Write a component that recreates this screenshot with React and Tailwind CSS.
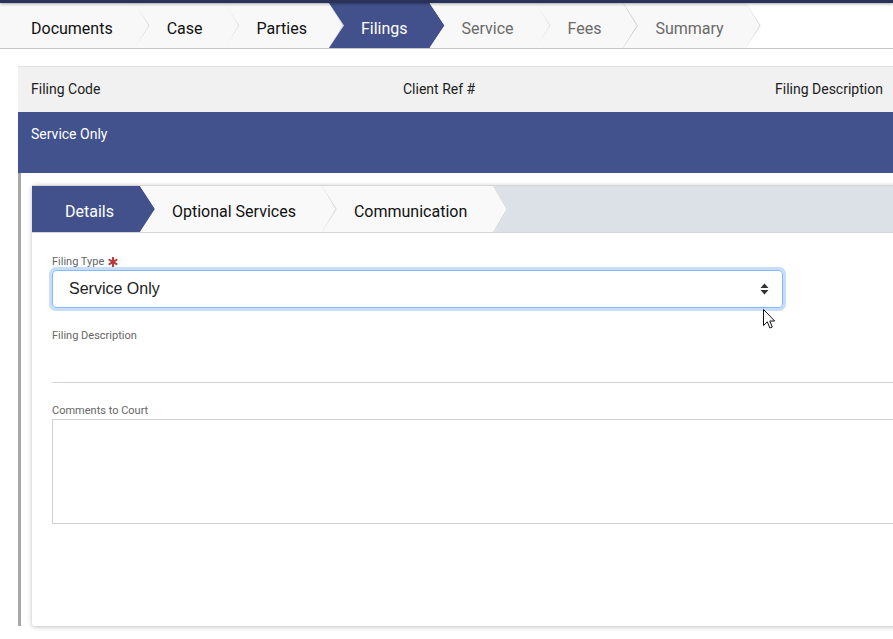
import React from "react";

const steps = [
  { label: "Documents", state: "done" },
  { label: "Case", state: "done" },
  { label: "Parties", state: "done" },
  { label: "Filings", state: "active" },
  { label: "Service", state: "todo" },
  { label: "Fees", state: "todo" },
  { label: "Summary", state: "todo" },
];

const tabs = [
  { label: "Details", active: true },
  { label: "Optional Services" },
  { label: "Communication" },
];

function Chevron() {
  return (
    <svg width="15" height="100%" viewBox="0 0 15 45" preserveAspectRatio="none" className="shrink-0 h-full">
      <polyline points="0.5,0 14.2,22.5 0.5,45" fill="none" stroke="#d6d6d6" strokeWidth="1.2" />
    </svg>
  );
}

function Step({ step, first }) {
  const active = step.state === "active";
  const shape = first
    ? "[clip-path:polygon(0_0,calc(100%_-_15px)_0,100%_50%,calc(100%_-_15px)_100%,0_100%)]"
    : "[clip-path:polygon(0_0,calc(100%_-_15px)_0,100%_50%,calc(100%_-_15px)_100%,0_100%,15px_50%)]";
  const color = active ? "text-white" : step.state === "done" ? "text-[#111]" : "text-[#6a6a6a]";
  return (
    <div
      className={`flex h-full items-stretch ${first ? "pl-[31px]" : "-ml-[15px] pl-[32px]"} ${shape} ${
        active ? "bg-[#42518c]" : "bg-[#f8f8f8]"
      }`}
    >
      <span className={`flex items-center pt-[6px] pr-[22px] text-[16px] ${color}`}>{step.label}</span>
      {active ? <div className="w-[15px] shrink-0" /> : <Chevron />}
    </div>
  );
}

function Tab({ tab, first }) {
  const shape = first
    ? "[clip-path:polygon(0_0,calc(100%_-_15px)_0,100%_50%,calc(100%_-_15px)_100%,0_100%)]"
    : "[clip-path:polygon(0_0,calc(100%_-_15px)_0,100%_50%,calc(100%_-_15px)_100%,0_100%,15px_50%)]";
  return (
    <div
      className={`flex h-full items-stretch ${first ? "pl-[33px]" : "-ml-[15px] pl-[32px]"} ${shape} ${
        tab.active ? "bg-[#42518c]" : "bg-[#f9f9f9]"
      }`}
    >
      <span className={`flex items-center pt-[5px] pr-[26px] text-[16px] ${tab.active ? "text-white" : "text-[#111]"}`}>
        {tab.label}
      </span>
      {tab.active ? <div className="w-[15px] shrink-0" /> : <Chevron />}
    </div>
  );
}

function Label({ children, required }) {
  return (
    <div className="flex h-[16px] items-center gap-[4px] text-[11px] leading-[16px] text-[#666]">
      <span>{children}</span>
      {required && (
        <svg width="10" height="10" viewBox="0 0 10 10" className="-mt-[1px]">
          <g stroke="#b83a3a" strokeWidth="2" strokeLinecap="round">
            <line x1="5" y1="0.8" x2="5" y2="9.2" />
            <line x1="1.4" y1="2.9" x2="8.6" y2="7.1" />
            <line x1="1.4" y1="7.1" x2="8.6" y2="2.9" />
          </g>
        </svg>
      )}
    </div>
  );
}

export default function App() {
  return (
    <div className="relative h-[639px] w-[893px] overflow-hidden bg-white font-['Roboto','Liberation_Sans',sans-serif]">
      {/* top bar */}
      <div className="relative z-10 h-[3px] bg-[#2a325a] shadow-[0_1px_3px_rgba(0,0,0,0.35)]" />

      {/* stepper */}
      <div className="flex h-[46px] items-stretch border-b border-[#c9c9c9] bg-white">
        {steps.map((s, i) => (
          <Step key={s.label} step={s} first={i === 0} />
        ))}
      </div>

      <div className="ml-[18px] mt-[17px] w-[940px]">
        {/* filings table */}
        <div className="grid h-[46px] grid-cols-[372px_372px_372px] items-center border-t border-[#e2e2e2] bg-[#f1f1f1] text-[14px] text-[#222]">
          <div className="pl-[13px]">Filing Code</div>
          <div className="pl-[13px]">Client Ref #</div>
          <div className="pl-[13px]">Filing Description</div>
        </div>
        <div className="h-[61px] bg-[#42528c] pl-[13px] pt-[12px] text-[14px] leading-[20px] text-white">
          Service Only
        </div>

        {/* detail panel */}
        <div className="border-l-[3px] border-[#a8a8a8] pl-[11px] pt-[12px]">
          <div className="h-[441px] w-[920px] rounded-[3px] bg-white shadow-[0_1px_5px_rgba(0,0,0,0.25)]">
            <div className="flex h-[48px] items-stretch border-y border-[#d6d6d6] bg-[#dce0e7]">
              {tabs.map((t, i) => (
                <Tab key={t.label} tab={t} first={i === 0} />
              ))}
            </div>

            <div className="px-[20px] pt-[21px]">
              <Label required>Filing Type</Label>
              <div className="flex h-[38px] w-[731px] items-center justify-between rounded-[4px] border border-[#86b7f6] pl-[16px] pr-[13px] font-['Liberation_Sans',sans-serif] text-[16px] text-[#222] ring-[3px] ring-[#c6ddfb]">
                <span>Service Only</span>
                <svg width="9" height="12" viewBox="0 0 9 12">
                  <path d="M0.5 5 L4.5 0.5 L8.5 5 Z M0.5 7 L4.5 11.5 L8.5 7 Z" fill="#333" />
                </svg>
              </div>

              <div className="mt-[20px]">
                <Label>Filing Description</Label>
                <div className="h-[39px] border-b border-[#cfd3d8]" />
              </div>

              <div className="mt-[20px]">
                <Label>Comments to Court</Label>
                <div className="h-[105px] border border-[#cfd3d8]" />
              </div>
            </div>
          </div>
        </div>
      </div>

      {/* mouse pointer */}
      <svg width="13" height="21" viewBox="0 0 13 21" className="absolute left-[763px] top-[309px]">
        <path
          d="M0.5 0.5 L0.5 16.5 L4.3 12.8 L6.9 19 L9.3 18 L6.8 12 L11.7 12 Z"
          fill="#fff"
          stroke="#111"
          strokeWidth="1"
          strokeLinejoin="round"
        />
      </svg>
    </div>
  );
}
